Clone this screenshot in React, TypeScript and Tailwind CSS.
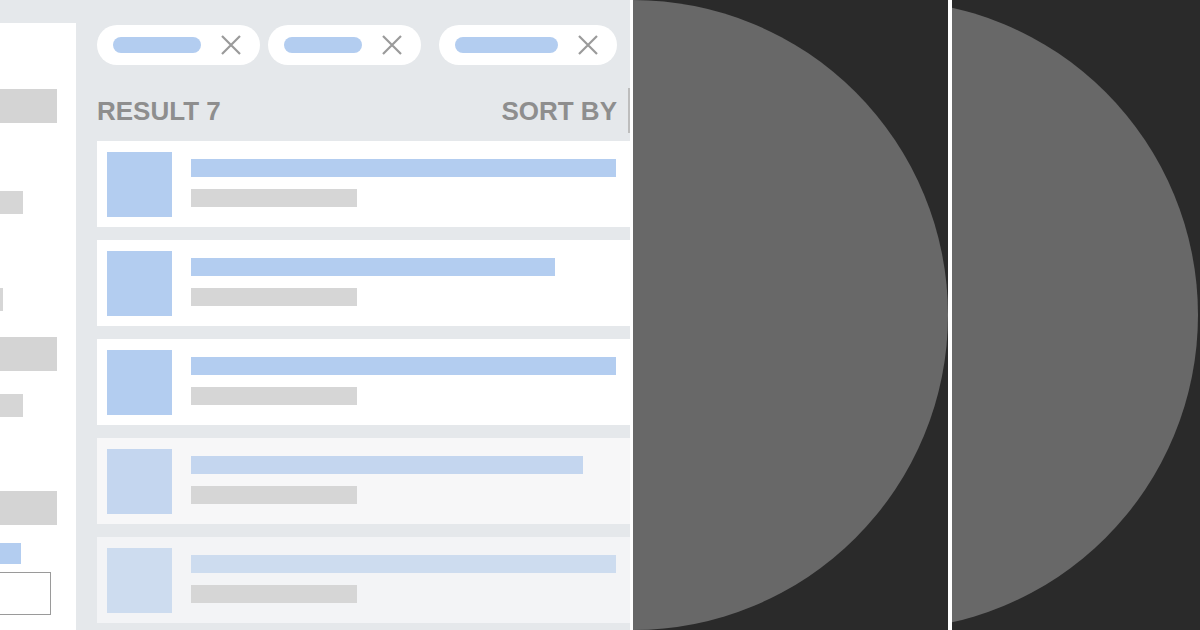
import React from "react";

function XIcon() {
  return (
    <svg width="22" height="22" viewBox="0 0 22 22" className="shrink-0">
      <path d="M2 2 L20 20 M20 2 L2 20" stroke="#9a9a9a" strokeWidth="2.2" strokeLinecap="butt" fill="none" />
    </svg>
  );
}

function Chip({ pill, ml }: { pill: string; ml: string }) {
  return (
    <div className={`flex items-center h-[40px] rounded-full bg-white pl-4 pr-[18px] gap-[19px] shrink-0 ${ml}`}>
      <div className={`h-[16px] rounded-full bg-[#b3cdf0] ${pill}`} />
      <XIcon />
    </div>
  );
}

type Card = { bar: string; bg: string; blue: string };

const cards: Card[] = [
  { bar: "w-[425px]", bg: "bg-white", blue: "bg-[#b3cdf0]" },
  { bar: "w-[364px]", bg: "bg-white", blue: "bg-[#b3cdf0]" },
  { bar: "w-[425px]", bg: "bg-white", blue: "bg-[#b3cdf0]" },
  { bar: "w-[392px]", bg: "bg-[#f7f7f8]", blue: "bg-[#c4d6ef]" },
  { bar: "w-[425px]", bg: "bg-[#f3f4f6]", blue: "bg-[#cddcef]" },
];

export default function App() {
  return (
    <div className="flex w-[1200px] h-[630px] overflow-hidden bg-white" style={{ fontFamily: '"Liberation Sans", Arial, sans-serif' }}>
      {/* left light UI */}
      <div className="flex w-[630px] h-full shrink-0 overflow-hidden bg-[#e5e8eb]">
        {/* sidebar */}
        <div className="w-[76px] shrink-0 mt-[23px] bg-white flex flex-col overflow-hidden">
          <div className="mt-[66px] w-[57px] h-[34px] bg-[#d4d4d4]" />
          <div className="mt-[68px] w-[23px] h-[23px] bg-[#d6d6d6]" />
          <div className="mt-[74px] w-[3px] h-[23px] bg-[#d6d6d6]" />
          <div className="mt-[26px] w-[57px] h-[34px] bg-[#d4d4d4]" />
          <div className="mt-[23px] w-[23px] h-[23px] bg-[#d6d6d6]" />
          <div className="mt-[74px] w-[57px] h-[34px] bg-[#d4d4d4]" />
          <div className="mt-[18px] w-[21px] h-[21px] bg-[#b3cdf0]" />
          <div className="mt-[8px] -ml-[10px] w-[61px] h-[43px] border border-[#9a9a9a] bg-white" />
        </div>
        {/* main column */}
        <div className="ml-[21px] w-[533px] shrink-0 flex flex-col pt-[25px]">
          <div className="flex items-center">
            <Chip pill="w-[88px]" ml="" />
            <Chip pill="w-[78px]" ml="ml-[8px]" />
            <Chip pill="w-[103px]" ml="ml-[18px]" />
          </div>
          <div className="flex items-center justify-between h-[45px] mt-[23px]">
            <span className="text-[26px] font-bold text-[#8e8e8e] leading-none">RESULT 7</span>
            <div className="flex items-center h-full">
              <span className="text-[26px] font-bold text-[#8e8e8e] leading-none">SORT BY</span>
              <div className="ml-[11px] w-[2px] h-[45px] bg-[#bdbdbd]" />
            </div>
          </div>
          <div className="flex flex-col gap-[13px] mt-[8px]">
            {cards.map((c, i) => (
              <div key={i} className={`h-[86px] w-full flex items-center pl-[10px] ${c.bg}`}>
                <div className={`w-[65px] h-[65px] shrink-0 ${c.blue}`} />
                <div className="ml-[19px] flex flex-col gap-[12px] -mt-[3px]">
                  <div className={`h-[18px] ${c.bar} ${c.blue}`} />
                  <div className="h-[18px] w-[166px] bg-[#d6d6d6]" />
                </div>
              </div>
            ))}
          </div>
        </div>
      </div>
      {/* divider */}
      <div className="w-[3px] h-full bg-white shrink-0" />
      {/* panel 1 */}
      <div className="w-[315px] h-full shrink-0 bg-[#2a2a2a]">
        <svg width="315" height="630" viewBox="0 0 315 630" className="block">
          <circle cx="0" cy="315" r="315" fill="#686868" />
        </svg>
      </div>
      <div className="w-[4px] h-full bg-white shrink-0" />
      {/* panel 2 */}
      <div className="w-[248px] h-full shrink-0 bg-[#2a2a2a]">
        <svg width="248" height="630" viewBox="0 0 248 630" className="block">
          <circle cx="-69" cy="315" r="315" fill="#686868" />
        </svg>
      </div>
    </div>
  );
}
